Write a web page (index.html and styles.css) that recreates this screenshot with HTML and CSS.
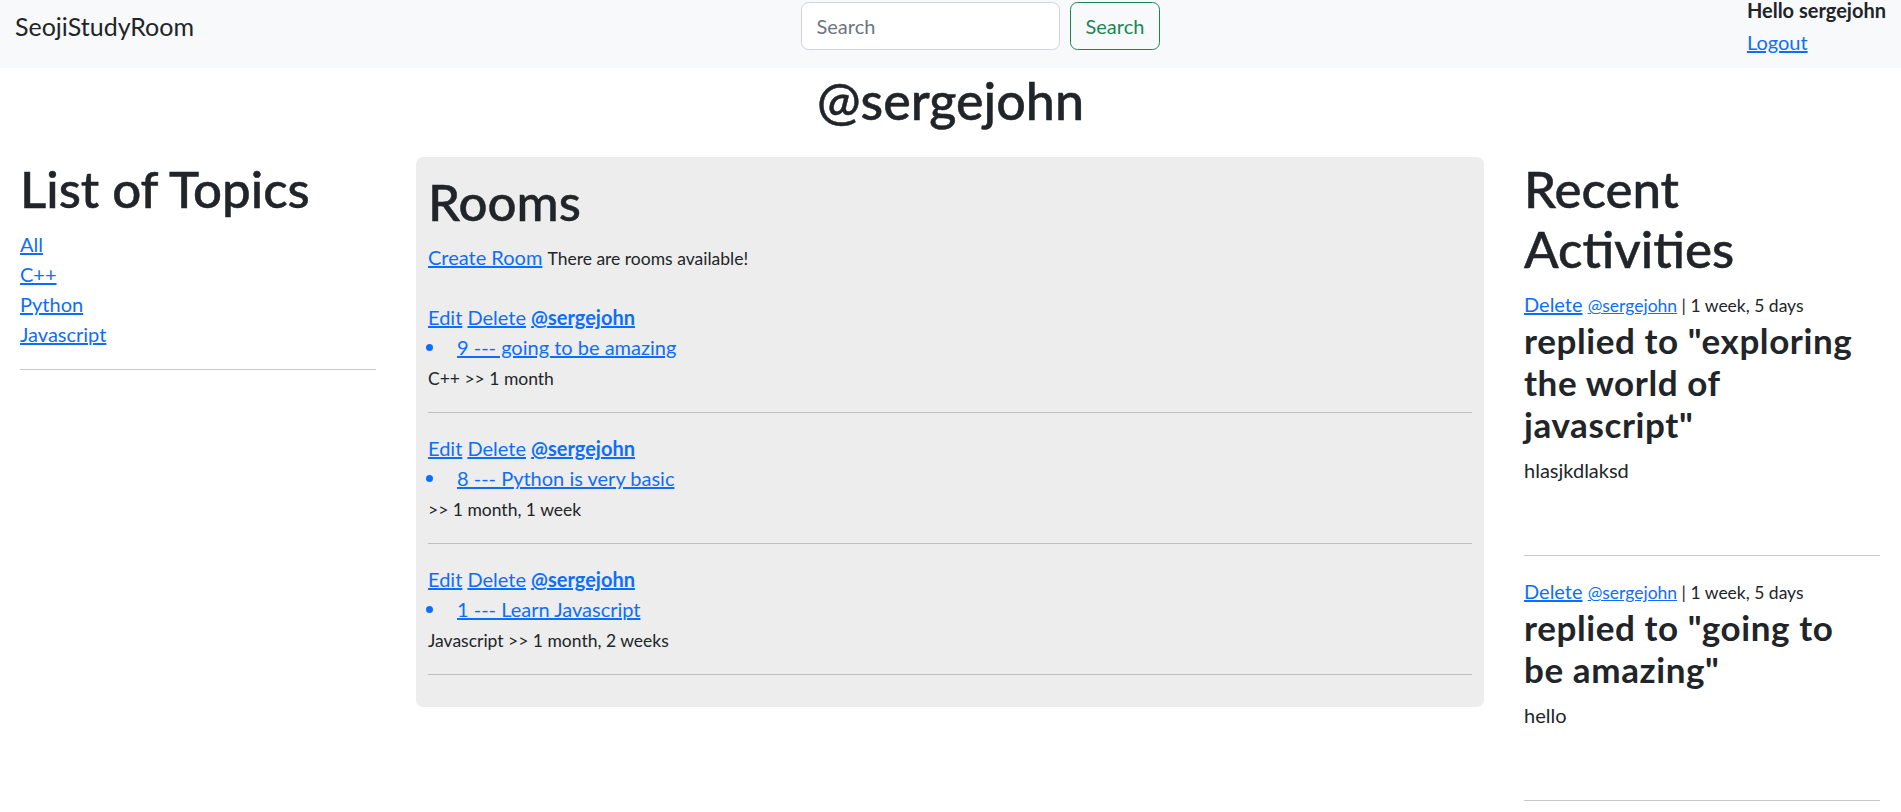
FILE: index.html
```html
<!DOCTYPE html>
<html>

<head>
    <title>SeojiStudyRoom</title>
    <meta charset="utf-8">
    <link rel="stylesheet" href="styles.css">
</head>

<body>
    <div class="navbar">
        <a class="brand" href="#">SeojiStudyRoom</a>
        <form class="search" action="#">
            <input class="search-input" type="search" placeholder="Search">
            <button class="search-btn" type="submit">Search</button>
        </form>
        <div class="user">
            <p class="hello">Hello sergejohn</p>
            <a href="#">Logout</a>
        </div>
    </div>

    <h1 class="profile-title">@sergejohn</h1>

    <div class="page">
        <div class="topics">
            <h1>List of Topics</h1>
            <div class="topic-links">
                <a href="#">All</a>
                <a href="#">C++</a>
                <a href="#">Python</a>
                <a href="#">Javascript</a>
            </div>
            <hr>
        </div>

        <div class="rooms">
            <h1>Rooms</h1>
            <div class="rooms-top">
                <a href="#">Create Room</a> <small>There are rooms available!</small>
                <br><br>
            </div>

            <div class="room">
                <div><a href="#">Edit</a> <a href="#">Delete</a> <a href="#"><strong>@sergejohn</strong></a></div>
                <ul>
                    <li><a href="#">9 --- going to be amazing</a></li>
                </ul>
                <div><small>C++ &gt;&gt; 1 month</small></div>
                <hr>
            </div>

            <div class="room">
                <div><a href="#">Edit</a> <a href="#">Delete</a> <a href="#"><strong>@sergejohn</strong></a></div>
                <ul>
                    <li><a href="#">8 --- Python is very basic</a></li>
                </ul>
                <div><small>&gt;&gt; 1 month, 1 week</small></div>
                <hr>
            </div>

            <div class="room">
                <div><a href="#">Edit</a> <a href="#">Delete</a> <a href="#"><strong>@sergejohn</strong></a></div>
                <ul>
                    <li><a href="#">1 --- Learn Javascript</a></li>
                </ul>
                <div><small>Javascript &gt;&gt; 1 month, 2 weeks</small></div>
                <hr>
            </div>
        </div>

        <div class="activities">
            <h1>Recent Activities</h1>

            <div class="activity">
                <div><a href="#">Delete</a> <small><a href="#">@sergejohn</a> | 1 week, 5 days</small></div>
                <h3>replied to "exploring the world of javascript"</h3>
                <p>hlasjkdlaksd</p>
                <br>
                <hr>
            </div>

            <div class="activity">
                <div><a href="#">Delete</a> <small><a href="#">@sergejohn</a> | 1 week, 5 days</small></div>
                <h3>replied to "going to be amazing"</h3>
                <p>hello</p>
                <br>
                <hr>
            </div>
        </div>
    </div>
</body>

</html>
```

FILE: styles.css
```css
body {
    margin: 0;
    font-family: Lato, "Liberation Sans", sans-serif;
    font-size: 20px;
    line-height: 30px;
    color: #212529;
    background-color: white;
}

a {
    color: #0d6efd;
}

small {
    font-size: 17.5px;
    line-height: 1;
}

h1 {
    font-size: 51px;
    font-weight: 500;
    line-height: 60px;
    -webkit-text-stroke: 0.5px currentColor;
    padding-top: 2px;
    margin: 0 0 10px;
}

hr {
    border: none;
    border-top: 1px solid #c8c9ca;
    margin: 20px 0;
}

/* top bar */

.navbar {
    display: flex;
    justify-content: space-between;
    align-items: flex-start;
    height: 68px;
    box-sizing: border-box;
    padding: 2px 15px 0;
    background-color: #f8f9fa;
}

.navbar .brand {
    font-size: 25px;
    line-height: 37.5px;
    padding: 6px 0;
    margin-right: 20px;
    color: #212529;
    text-decoration: none;
}

.search {
    display: flex;
    margin: 0;
}

.search-input {
    width: 259px;
    height: 47.5px;
    box-sizing: border-box;
    padding: 7.5px 15px;
    margin-right: 10px;
    border: 1px solid #ced4da;
    border-radius: 7.5px;
    background-color: white;
    font-family: inherit;
    font-size: 20px;
    color: #212529;
}

.search-input::placeholder {
    color: #6c757d;
}

.search-btn {
    height: 47.5px;
    box-sizing: border-box;
    padding: 7.5px 15px;
    border: 1px solid #198754;
    border-radius: 7.5px;
    background-color: transparent;
    color: #198754;
    font-family: inherit;
    font-size: 20px;
}

.user {
    margin-top: -7px;
}

.user .hello {
    margin: 0 0 2px;
    font-weight: 700;
}

/* page */

.profile-title {
    text-align: center;
    font-size: 52px;
    margin: 0 0 27px;
}

.page {
    display: grid;
    grid-template-columns: 1fr 3fr 1fr;
    column-gap: 40px;
    align-items: start;
    padding: 0 21px 0 20px;
}

.topic-links a {
    display: block;
    width: max-content;
}

.rooms {
    background-color: #ededed;
    border-radius: 7px;
    padding: 13px 12px 12px;
}

.rooms hr {
    border-top-color: #bebebe;
}

.room ul {
    margin: 0;
    padding: 0;
    list-style: none;
}

.room li::before {
    content: "";
    display: inline-block;
    width: 7px;
    height: 7px;
    border-radius: 50%;
    background-color: #0d6efd;
    margin: 0 24px 0 -2px;
    vertical-align: 4px;
}

.activity h3 {
    font-size: 35px;
    font-weight: 700;
    line-height: 42px;
    letter-spacing: 0.6px;
    margin: 0 0 10px;
}

.activity p {
    margin: 0 0 20px;
}
```
